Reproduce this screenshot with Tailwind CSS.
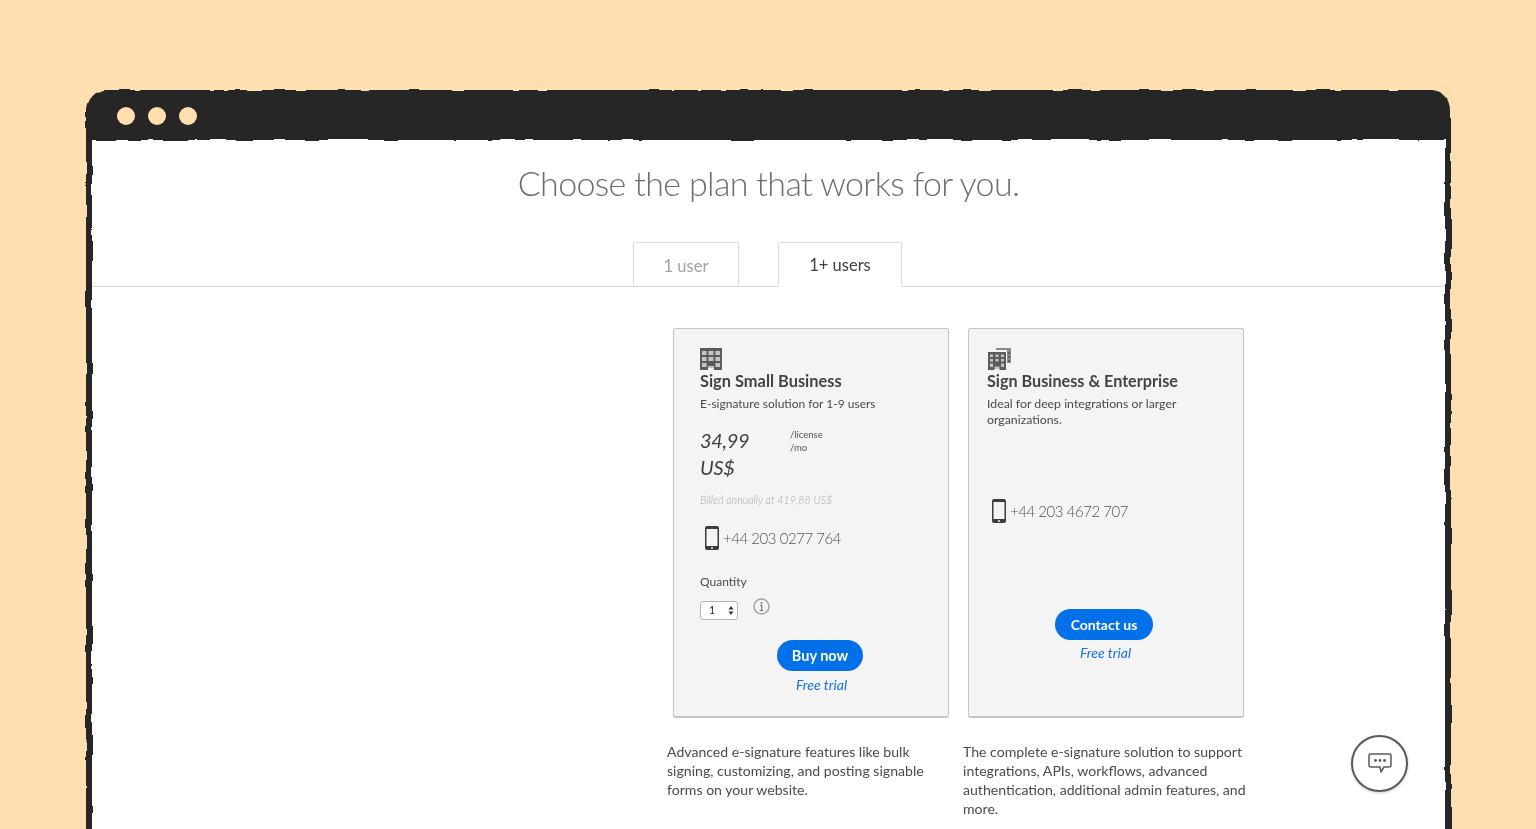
<!DOCTYPE html>
<html lang="en">
<head>
    <meta charset="UTF-8" />
    <meta name="viewport" content="width=device-width, initial-scale=1.0"/>
    <title>Choose the plan</title>
    <script src="https://cdn.jsdelivr.net/npm/@tailwindcss/browser@4"></script>
</head>
<body class="relative h-[829px] overflow-hidden bg-[#ffdeaf] font-['Lato','Open_Sans',sans-serif] text-[#4b4b4b]">

    <!-- hand drawn window frame -->
    <svg class="absolute inset-0" width="1536" height="829" viewBox="0 0 1536 829">
        <defs>
            <filter id="wobble" x="0" y="0" width="100%" height="100%" filterUnits="userSpaceOnUse" primitiveUnits="userSpaceOnUse">
                <feTurbulence type="fractalNoise" baseFrequency="0.045" numOctaves="2" seed="7"/>
                <feDisplacementMap in="SourceGraphic" scale="4" xChannelSelector="R" yChannelSelector="G"/>
            </filter>
        </defs>
        <g filter="url(#wobble)">
            <rect x="86" y="90" width="1365" height="800" rx="20" fill="#252525"/>
            <rect x="92" y="140" width="1353" height="740" fill="#ffffff"/>
        </g>
    </svg>

    <div class="absolute left-[117px] top-[107px] flex gap-[13px]">
        <span class="size-[18px] rounded-full bg-[#ffdeaf]"></span>
        <span class="size-[18px] rounded-full bg-[#ffdeaf]"></span>
        <span class="size-[18px] rounded-full bg-[#ffdeaf]"></span>
    </div>

    <main class="relative ml-[92px] w-[1353px] pt-[140px] blur-[0.3px]">
        <h1 class="pt-[20px] text-center text-[34px] leading-[46px] font-light tracking-[-0.65px] text-[#6e6e6e]">Choose the plan that works for you.</h1>

        <!-- tabs -->
        <div class="mt-[36px] flex justify-center gap-[39px] border-b border-[#d8d8d8] pr-[2px]">
            <div class="-mb-px flex h-[45px] w-[106px] items-center justify-center rounded-t-[2px] border border-b-0 border-[#dcdcdc] pt-[2px] text-[16.5px] text-[#a3a3a3]">1 user</div>
            <div class="-mb-px flex h-[45px] w-[124px] items-center justify-center rounded-t-[2px] border border-[#dcdcdc] border-b-white bg-white pt-[2px] text-[16.5px] text-[#3f3f3f]">1+ users</div>
        </div>

        <!-- plans -->
        <div class="mt-[41px] ml-[581px] flex gap-[19px]">
            <div class="w-[276px]">
                <div class="h-[390px] rounded-[3px] border border-b-2 border-[#c4c4c4] bg-[#f4f4f4] pt-[19px] pl-[26px]">
                    <svg width="22" height="22" viewBox="0 0 22 22" class="block">
                        <path fill="#c4c4c4" d="M1 2H21V20H1Z"/>
                        <path fill="#5c5c5c" fill-rule="evenodd" d="M0 0H22V22H14V18H8V22H0Z M2 3V7H6.500V3Z M8.500 3V7H13.500V3Z M15.500 3V7H20V3Z M2 9V13H6.500V9Z M8.500 9V13H13.500V9Z M15.500 9V13H20V9Z M2 15V19H6.500V15Z M15.500 15V19H20V15Z"/>
                    </svg>
                    <h2 class="text-[16.4px] leading-[21px] font-bold text-[#444444]">Sign Small Business</h2>
                    <p class="mt-[4px] text-[12px] leading-[17px] text-[#4b4b4b]">E-signature solution for 1-9 users</p>
                    <div class="mt-[15px] flex">
                        <div class="w-[90px] text-[20px] leading-[27px] tracking-[-0.3px] text-[#3f3f3f] italic">34,99<br />US$</div>
                        <div class="pt-[1px] text-[9.500px] leading-[13px] text-[#555555]">/license<br />/mo</div>
                    </div>
                    <p class="mt-[12px] text-[10.750px] leading-[14px] font-light text-[#aaaaaa] italic">Billed annually at 419,88 US$</p>
                    <div class="mt-[19px] ml-[5px] flex items-center gap-[4px]">
                        <svg width="14" height="24" viewBox="0 0 14 24">
                            <path fill="#3c3c3c" fill-rule="evenodd" d="M2 0H12Q14 0 14 2V22Q14 24 12 24H2Q0 24 0 22V2Q0 0 2 0Z M1.500 3V20H12.500V3Z"/>
                            <circle cx="7" cy="22" r="1" fill="#f4f4f4"/>
                        </svg>
                        <span class="text-[15px] leading-[24px] font-light tracking-[-0.45px] text-[#555555]">+44 203 0277 764</span>
                    </div>
                    <p class="mt-[23px] text-[12px] leading-[17px] text-[#4b4b4b]">Quantity</p>
                    <div class="mt-[3px] flex items-start gap-[15px]">
                        <div class="mt-[8px] flex h-[19px] w-[38px] items-center justify-between rounded-[3px] border border-[#b5b5b5] bg-white pr-[3px] pl-[8px] text-[10.500px] text-[#222222]">
                            1
                            <svg width="6" height="11" viewBox="0 0 6 11"><path fill="#333333" d="M3 1L5.500 4.500H.5Z M3 10L5.500 6.500H.5Z"/></svg>
                        </div>
                        <svg width="17" height="17" viewBox="0 0 17 17" class="mt-[5px]">
                            <circle cx="8.500" cy="8.500" r="7.500" fill="none" stroke="#a3a3a3" stroke-width="1.500"/>
                            <circle cx="8.500" cy="5" r="1" fill="#777777"/>
                            <path fill="none" stroke="#777777" stroke-width="1.200" d="M7 7.500H8.700V12.500M6.800 12.500H10.200"/>
                        </svg>
                    </div>
                    <div class="mt-[20px] ml-[77px] flex h-[31px] w-[86px] items-center justify-center rounded-full bg-[#0270e8] text-[14.500px] font-bold text-white">Buy now</div>
                    <p class="mt-[5px] ml-[96px] text-[14px] leading-[18px] text-[#1473e6] italic">Free trial</p>
                </div>
                <p class="mt-[24px] -ml-[6px] w-[270px] text-[14.100px] leading-[19px] text-[#4b4b4b]">Advanced e-signature features like bulk signing, customizing, and posting signable forms on your website.</p>
            </div>

            <div class="w-[276px]">
                <div class="h-[390px] rounded-[3px] border border-b-2 border-[#c4c4c4] bg-[#f4f4f4] pt-[19px] pl-[18px]">
                    <svg width="23" height="22" viewBox="0 0 23 22" class="ml-[1px] block">
                        <path fill="#8a8a8a" d="M8 0H23V15H19V2H8Z"/>
                        <path fill="#c4c4c4" d="M1 5H17V21H1Z"/>
                        <path fill="#5c5c5c" fill-rule="evenodd" d="M0 4H18V22H11.500V18.500H6.500V22H0Z M2 6.500V9H5V6.500Z M7.500 6.500V9H10.500V6.500Z M13 6.500V9H16V6.500Z M2 11V13.500H5V11Z M7.500 11V13.500H10.500V11Z M13 11V13.500H16V11Z M2 15.500V19H5V15.500Z M13 15.500V19H16V15.500Z"/>
                        <path fill="#5c5c5c" d="M20 4H22V6H20Z M20 8H22V10H20Z M20 12H22V14H20Z"/>
                    </svg>
                    <h2 class="text-[16.2px] leading-[21px] font-bold text-[#444444]">Sign Business &amp; Enterprise</h2>
                    <p class="mt-[5px] w-[215px] text-[12.300px] leading-[16px] text-[#4b4b4b]">Ideal for deep integrations or larger organizations.</p>
                    <div class="mt-[71px] ml-[5px] flex items-center gap-[4px]">
                        <svg width="14" height="24" viewBox="0 0 14 24">
                            <path fill="#3c3c3c" fill-rule="evenodd" d="M2 0H12Q14 0 14 2V22Q14 24 12 24H2Q0 24 0 22V2Q0 0 2 0Z M1.500 3V20H12.500V3Z"/>
                            <circle cx="7" cy="22" r="1" fill="#f4f4f4"/>
                        </svg>
                        <span class="text-[15px] leading-[24px] font-light tracking-[-0.45px] text-[#555555]">+44 203 4672 707</span>
                    </div>
                    <div class="mt-[86px] ml-[68px] flex h-[31px] w-[98px] items-center justify-center rounded-full bg-[#0270e8] text-[14px] font-bold text-white">Contact us</div>
                    <p class="mt-[4px] ml-[93px] text-[14px] leading-[18px] text-[#1473e6] italic">Free trial</p>
                </div>
                <p class="mt-[24px] -ml-[5px] w-[290px] text-[14.100px] leading-[19px] text-[#4b4b4b]">The complete e-signature solution to support integrations, APIs, workflows, advanced authentication, additional admin features, and more.</p>
            </div>
        </div>
    </main>

    <!-- chat button -->
    <div class="absolute top-[735px] left-[1351px] flex size-[57px] items-center justify-center rounded-full border-2 border-[#5a5a5a] bg-white shadow-[0_1px_3px_rgba(0,0,0,0.2)]">
        <svg width="24" height="21" viewBox="0 0 24 21">
            <path fill="none" stroke="#5a5a5a" stroke-width="1.500" stroke-linejoin="round" d="M3 1H21Q23 1 23 3V12Q23 14 21 14H16L13 19L12 14H3Q1 14 1 12V3Q1 1 3 1Z"/>
            <circle cx="7.500" cy="7.500" r="1.400" fill="#5a5a5a"/>
            <circle cx="12" cy="7.500" r="1.400" fill="#5a5a5a"/>
            <circle cx="16.500" cy="7.500" r="1.400" fill="#5a5a5a"/>
        </svg>
    </div>
</body>
</html>
